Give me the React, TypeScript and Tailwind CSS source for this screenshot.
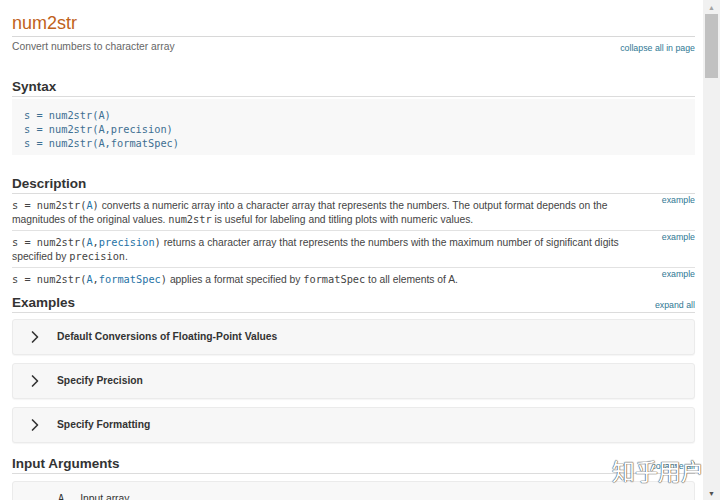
import { ChevronRight } from "lucide-react";

const mono = "font-['DejaVu_Sans_Mono',monospace]";

const syntaxLines = ["s = num2str(A)", "s = num2str(A,precision)", "s = num2str(A,formatSpec)"];

const examples = [
  "Default Conversions of Floating-Point Values",
  "Specify Precision",
  "Specify Formatting",
];

function Heading({ title, link }: { title: string; link?: string }) {
  return (
    <div className="flex items-end justify-between border-b border-[#dcdcdc] pb-[1px]">
      <h2 className="text-[13.5px] font-bold leading-[16px] text-[#333]">{title}</h2>
      {link && <a className="text-[8.8px] leading-[11px] text-[#2f7894]">{link}</a>}
    </div>
  );
}

function Code({ children, blue }: { children: React.ReactNode; blue?: boolean }) {
  return (
    <code className={`${mono} text-[10.3px] leading-[10px] ${blue ? "text-[#1f73a6]" : "text-[#444]"}`}>
      {children}
    </code>
  );
}

function DescEntry({ children, last }: { children: React.ReactNode; last?: boolean }) {
  return (
    <div className={`flex items-start ${last ? "" : "border-b border-[#e2e2e2]"}`}>
      <p className="flex-1 pr-[14px] pt-[5px] pb-[4px] text-[10.3px] leading-[13.5px] text-[#444]">
        {children}
      </p>
      <a className="mt-[1px] text-[8.8px] leading-[11px] text-[#2f7894]">example</a>
    </div>
  );
}

export default function App() {
  return (
    <div className="relative flex h-[500px] w-[720px] overflow-hidden bg-white font-['Liberation_Sans',Arial,sans-serif]">
      <main className="flex-1 pl-3 pr-2 pt-[12px]">
        <h1 className="border-b border-[#d8d8d8] pb-[2px] text-[18px] leading-[22px] text-[#c0611a]">
          num2str
        </h1>
        <div className="mt-[3px] flex items-end justify-between">
          <p className="text-[10.3px] leading-[14px] text-[#666]">Convert numbers to character array</p>
          <a className="text-[8.8px] leading-[11px] text-[#2f7894]">collapse all in page</a>
        </div>

        <div className="mt-[25px]">
          <Heading title="Syntax" />
        </div>
        <div className="mt-[2px] bg-[#f8f8f8] pl-3 pt-[9px] pb-[5px]">
          {syntaxLines.map((l) => (
            <div key={l} className={`${mono} text-[10.3px] leading-[14px] text-[#3e6f92]`}>
              {l}
            </div>
          ))}
        </div>

        <div className="mt-[21px]">
          <Heading title="Description" />
        </div>
        <DescEntry>
          <Code>s = num2str(</Code>
          <Code blue>A</Code>
          <Code>)</Code> converts a numeric array into a character array that represents the numbers. The
          output format depends on the magnitudes of the original values. <Code>num2str</Code> is useful for
          labeling and titling plots with numeric values.
        </DescEntry>
        <DescEntry>
          <Code>s = num2str(</Code>
          <Code blue>A</Code>
          <Code>,</Code>
          <Code blue>precision</Code>
          <Code>)</Code> returns a character array that represents the numbers with the maximum number of
          significant digits specified by <Code>precision</Code>.
        </DescEntry>
        <DescEntry last>
          <Code>s = num2str(</Code>
          <Code blue>A</Code>
          <Code>,</Code>
          <Code blue>formatSpec</Code>
          <Code>)</Code> applies a format specified by <Code>formatSpec</Code> to all elements of A.
        </DescEntry>

        <div className="mt-[4px]">
          <Heading title="Examples" link="expand all" />
        </div>
        <div className="mt-[6px] flex flex-col gap-[8px]">
          {examples.map((e) => (
            <div
              key={e}
              className="flex h-[36px] items-center gap-[12px] rounded-[3px] border border-[#ebebeb] bg-[#f7f7f7] pl-[12px] shadow-[0_1px_1px_rgba(0,0,0,0.04)]"
            >
              <ChevronRight size={20} strokeWidth={2} className="text-[#333]" />
              <span className="text-[10.3px] font-bold text-[#333]">{e}</span>
            </div>
          ))}
        </div>

        <div className="mt-[13px]">
          <Heading title="Input Arguments" link="collapse all" />
        </div>
        <div className="mt-[7px] flex h-[40px] items-start gap-[16px] rounded-[3px] border border-[#ebebeb] bg-[#f8f8f8] pl-[45px] pt-[9px]">
          <span className={`${mono} text-[10.3px] text-[#333]`}>A</span>
          <span className="text-[10.3px] text-[#333]">Input array</span>
        </div>
      </main>

      <div className="flex w-[17px] flex-col bg-[#f1f1f1]">
        <div className="flex h-[14px] items-center justify-center text-[7px] leading-none text-[#a3a3a3]">▲</div>
        <div className="mx-[2px] h-[64px] bg-[#c1c1c1]" />
        <div className="flex-1" />
        <div className="flex h-[14px] items-center justify-center text-[7px] leading-none text-[#505050]">▼</div>
      </div>

      <div className="absolute left-[612px] top-[454px] font-['Noto_Sans_CJK_SC',sans-serif] text-[23px] leading-[32px] text-white [text-shadow:0_0_1px_#555,0_0_1px_#555,0_0_1px_#555]">
        知乎用户
      </div>
    </div>
  );
}
